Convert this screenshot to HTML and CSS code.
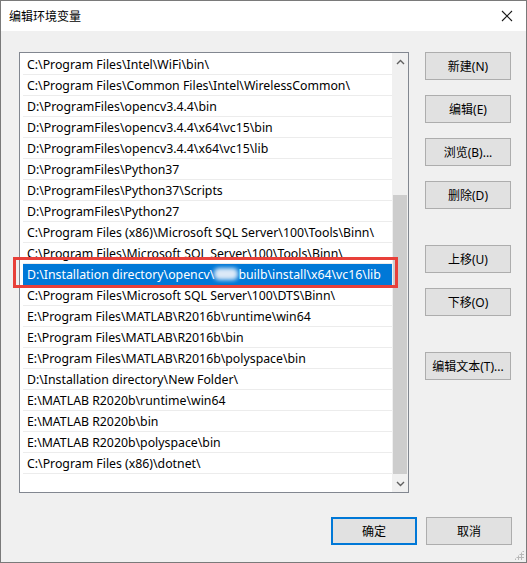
FILE: index.html
```html
<!DOCTYPE html>
<html lang="zh-CN">
<head>
    <meta charset="utf-8">
    <title>编辑环境变量</title>
    <link rel="stylesheet" href="styles.css">
</head>

<body>
    <div class="window">
        <div class="titlebar">
            <span class="title">编辑环境变量</span>
            <svg class="close" width="12" height="12" viewBox="0 0 12 12">
                <path d="M1 1 L11 11 M11 1 L1 11" stroke="#1a1a1a" stroke-width="1.1" fill="none"/>
            </svg>
        </div>

        <div class="content">
            <div class="main">
                <div class="listbox">
                    <div class="rows">
                        <div class="row">C:\Program Files\Intel\WiFi\bin\</div>
                        <div class="row">C:\Program Files\Common Files\Intel\WirelessCommon\</div>
                        <div class="row">D:\ProgramFiles\opencv3.4.4\bin</div>
                        <div class="row">D:\ProgramFiles\opencv3.4.4\x64\vc15\bin</div>
                        <div class="row">D:\ProgramFiles\opencv3.4.4\x64\vc15\lib</div>
                        <div class="row">D:\ProgramFiles\Python37</div>
                        <div class="row">D:\ProgramFiles\Python37\Scripts</div>
                        <div class="row">D:\ProgramFiles\Python27</div>
                        <div class="row">C:\Program Files (x86)\Microsoft SQL Server\100\Tools\Binn\</div>
                        <div class="row">C:\Program Files\Microsoft SQL Server\100\Tools\Binn\</div>
                        <div class="row selected">D:\Installation directory\opencv\<span class="masked"></span>builb\install\x64\vc16\lib</div>
                        <div class="row">C:\Program Files\Microsoft SQL Server\100\DTS\Binn\</div>
                        <div class="row">E:\Program Files\MATLAB\R2016b\runtime\win64</div>
                        <div class="row">E:\Program Files\MATLAB\R2016b\bin</div>
                        <div class="row">E:\Program Files\MATLAB\R2016b\polyspace\bin</div>
                        <div class="row">D:\Installation directory\New Folder\</div>
                        <div class="row">E:\MATLAB R2020b\runtime\win64</div>
                        <div class="row">E:\MATLAB R2020b\bin</div>
                        <div class="row">E:\MATLAB R2020b\polyspace\bin</div>
                        <div class="row">C:\Program Files (x86)\dotnet\</div>
                    </div>

                    <div class="scrollbar">
                        <div class="arrow">
                            <svg width="9" height="6" viewBox="0 0 9 6"><path d="M1 5 L4.5 1.5 L8 5" stroke="#606060" stroke-width="1.4" fill="none"/></svg>
                        </div>
                        <div class="track"><div class="thumb"></div></div>
                        <div class="arrow">
                            <svg width="9" height="6" viewBox="0 0 9 6"><path d="M1 1 L4.5 4.5 L8 1" stroke="#606060" stroke-width="1.4" fill="none"/></svg>
                        </div>
                    </div>

                    <!-- highlight box around the chosen entry -->
                    <div class="marker"></div>
                </div>

                <div class="side">
                    <div class="group">
                        <button class="btn">新建(N)</button>
                        <button class="btn">编辑(E)</button>
                        <button class="btn">浏览(B)...</button>
                        <button class="btn">删除(D)</button>
                    </div>
                    <div class="group">
                        <button class="btn">上移(U)</button>
                        <button class="btn">下移(O)</button>
                    </div>
                    <div class="group">
                        <button class="btn">编辑文本(T)...</button>
                    </div>
                </div>
            </div>

            <div class="footer">
                <button class="btn default">确定</button>
                <button class="btn">取消</button>
            </div>
            <div class="grip"></div>
        </div>
    </div>
</body>
</html>
```

FILE: styles.css
```css
body{margin: 0;background: #FFF;}

.window{
    width: 527px;
    height: 563px;
    box-sizing: border-box;
    border: 1px solid #7a7a7a;
    display: flex;
    flex-direction: column;
    font-family: "Noto Sans", "Noto Sans CJK SC", sans-serif;
    font-size: 12px;
    color: #000;
}

.titlebar{
    height: 30px;
    background: #FFF;
    display: flex;
    align-items: center;
    justify-content: space-between;
    padding: 0 13px 0 8px;
}

.title{font-size: 12px;}

.content{
    flex: 1;
    background: #f0f0f0;
    padding: 21px 14px 0 18px;
    position: relative;
}

.main{display: flex;gap: 16px;}

/* list of paths */
.listbox{
    width: 390px;
    height: 441px;
    box-sizing: border-box;
    border: 1px solid #828790;
    background: #FFF;
    display: flex;
    position: relative;
}

.rows{flex: 1;padding: 1px 0 0 3px;font-size: 12.3px;}

.row{
    height: 21px;
    box-sizing: border-box;
    border-bottom: 1px solid #ececec;
    padding-left: 4px;
    line-height: 21px;
    white-space: nowrap;
    overflow: hidden;
}

.row.selected{background: #0078d7;color: #FFF;border-bottom-color: #0078d7;}

.masked{
    display: inline-block;
    width: 24px;
    height: 12px;
    vertical-align: -1px;
    background: #dbe9f7;
    border-radius: 5px;
    filter: blur(2px);
}

.marker{
    position: absolute;
    left: -7px;
    top: 204px;
    width: 385px;
    height: 31px;
    box-sizing: border-box;
    border: 3px solid #e8403a;
}

.scrollbar{
    width: 16px;
    background: #f0f0f0;
    display: flex;
    flex-direction: column;
}

.arrow{height: 17px;display: flex;align-items: center;justify-content: center;}

.track{flex: 1;padding: 125px 1px 0 1px;}

.thumb{height: 279px;background: #cdcdcd;}

/* buttons on the right */
.side{display: flex;flex-direction: column;gap: 36px;}

.group{display: flex;flex-direction: column;gap: 15px;}

.btn{
    width: 86px;
    height: 28px;
    box-sizing: border-box;
    border: 1px solid #adadad;
    background: #e1e1e1;
    font-family: "Noto Sans", "Noto Sans CJK SC", sans-serif;
    font-size: 12px;
    color: #000;
    padding: 0;
}

.btn.default{border: 2px solid #0078d7;}

.footer{
    display: flex;
    justify-content: flex-end;
    gap: 9px;
    margin-top: 24px;
}

.grip{
    position: absolute;
    right: 2px;
    bottom: 2px;
    width: 10px;
    height: 10px;
    background-image: radial-gradient(circle, #b8b8b8 1px, transparent 1.2px);
    background-size: 3px 3px;
    clip-path: polygon(100% 0, 100% 100%, 0 100%);
}
```
